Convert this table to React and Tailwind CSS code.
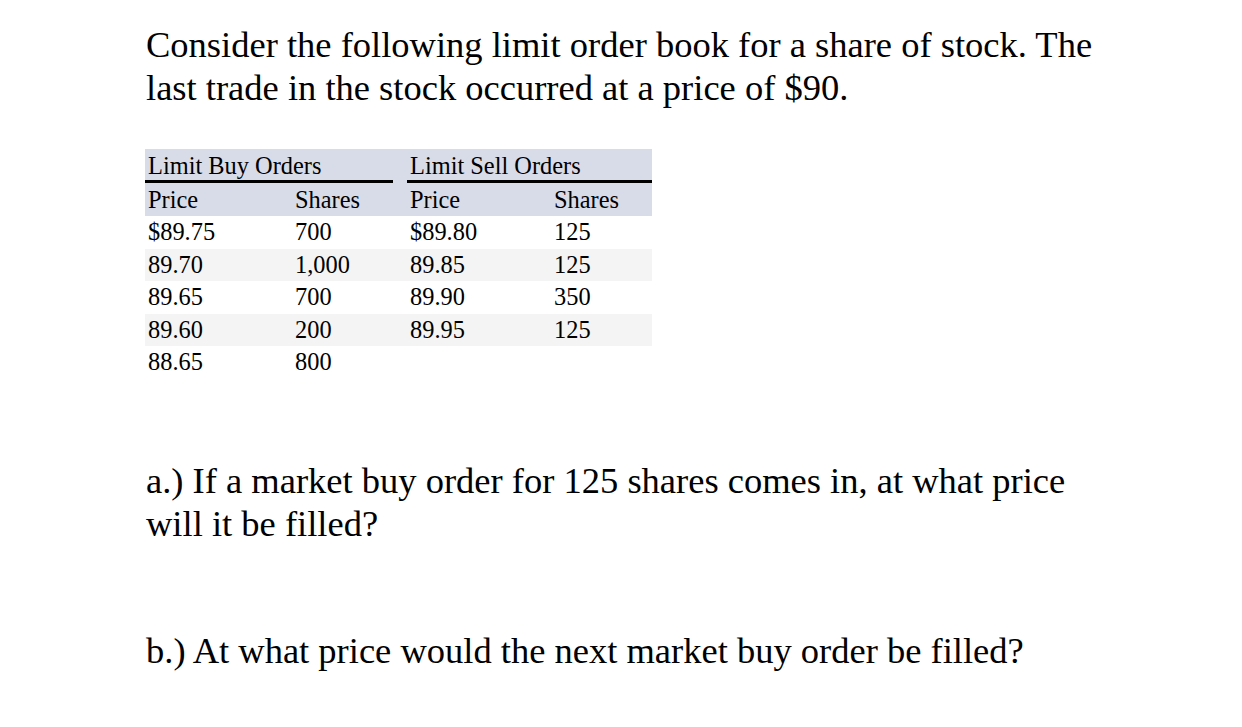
export default function App() {
  const rows = [
    ["$89.75", "700", "$89.80", "125"],
    ["89.70", "1,000", "89.85", "125"],
    ["89.65", "700", "89.90", "350"],
    ["89.60", "200", "89.95", "125"],
    ["88.65", "800", "", ""],
  ];
  return (
    <div
      className="w-[1242px] h-[727px] bg-white text-black pl-[146px] pt-[23px]"
      style={{ fontFamily: '"Liberation Serif", "Times New Roman", serif' }}
    >
      <p className="text-[36.5px] leading-[43px] w-[1050px]">
        Consider the following limit order book for a share of stock. The
        <br />
        last trade in the stock occurred at a price of $90.
      </p>

      <div className="mt-[40px] w-[507px] -ml-[1px] text-[24.4px]">
        <div className="flex bg-[#d8dce9] h-[34px] leading-[31px]">
          <div className="w-[248px] border-b-[3px] border-black pl-[3px] pt-[1px]">
            Limit Buy Orders
          </div>
          <div className="w-[14px]" />
          <div className="flex-1 border-b-[3px] border-black pl-[3px] pt-[1px]">
            Limit Sell Orders
          </div>
        </div>
        <div className="flex bg-[#d8dce9] h-[33px] leading-[33px]">
          <div className="w-[150px] pl-[3px]">Price</div>
          <div className="w-[112px]">Shares</div>
          <div className="w-[147px] pl-[3px]">Price</div>
          <div className="flex-1">Shares</div>
        </div>
        {rows.map((r, i) => (
          <div
            key={i}
            className={
              "flex h-[32.5px] leading-[32.5px] " +
              (i === 1 || i === 3 ? "bg-[#f4f4f4]" : "bg-white")
            }
          >
            <div className="w-[150px] pl-[3px]">{r[0]}</div>
            <div className="w-[112px]">{r[1]}</div>
            <div className="w-[147px] pl-[3px]">{r[2]}</div>
            <div className="flex-1">{r[3]}</div>
          </div>
        ))}
      </div>

      <p className="mt-[80px] text-[36.5px] leading-[43px] w-[1050px]">
        a.) If a market buy order for 125 shares comes in, at what price
        <br />
        will it be filled?
      </p>
      <p className="mt-[84px] text-[36.5px] leading-[43px] w-[1050px]">
        b.) At what price would the next market buy order be filled?
      </p>
    </div>
  );
}
